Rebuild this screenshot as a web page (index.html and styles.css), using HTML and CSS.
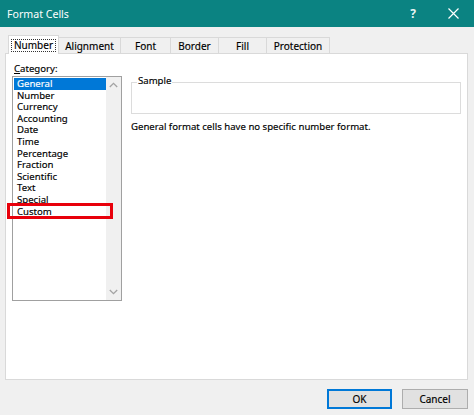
FILE: index.html
```html
<!DOCTYPE html>
<html>
<head>
<meta charset="utf-8">
<link rel="stylesheet" href="styles.css">
</head>
<body>
<div class="window">
  <div class="titlebar">
    <span class="title">Format Cells</span>
    <span class="help">?</span>
    <svg class="close" width="11" height="11" viewBox="0 0 11 11"><path d="M0.5 0.5L10.5 10.5M10.5 0.5L0.5 10.5" stroke="#ffffff" stroke-width="1.2" fill="none"/></svg>
  </div>
  <div class="body">
    <div class="tabs">
      <div class="tab active"><span class="focus">Number</span></div>
      <div class="tab w-align">Alignment</div>
      <div class="tab w-font">Font</div>
      <div class="tab w-border">Border</div>
      <div class="tab w-fill">Fill</div>
      <div class="tab w-prot">Protection</div>
    </div>
    <div class="panel">
      <div class="left">
        <div class="label"><u>C</u>ategory:</div>
        <div class="listbox">
          <ul class="items">
            <li class="sel">General</li>
            <li>Number</li>
            <li>Currency</li>
            <li>Accounting</li>
            <li>Date</li>
            <li>Time</li>
            <li>Percentage</li>
            <li>Fraction</li>
            <li>Scientific</li>
            <li>Text</li>
            <li>Special</li>
            <li>Custom</li>
          </ul>
          <div class="scrollbar">
            <svg width="9" height="6" viewBox="0 0 9 6"><path d="M0.8 5L4.5 1.3L8.2 5" stroke="#a3a3a3" stroke-width="1.3" fill="none"/></svg>
            <svg width="9" height="6" viewBox="0 0 9 6"><path d="M0.8 1L4.5 4.7L8.2 1" stroke="#a3a3a3" stroke-width="1.3" fill="none"/></svg>
          </div>
        </div>
      </div>
      <div class="right">
        <div class="sample">
          <span class="legend">Sample</span>
        </div>
        <div class="desc">General format cells have no specific number format.</div>
      </div>
    </div>
    <div class="buttons">
      <div class="btn ok">OK</div>
      <div class="btn cancel">Cancel</div>
    </div>
  </div>
  <div class="highlight"></div>
</div>
</body>
</html>
```
FILE: styles.css
```css
html, body {
  margin: 0;
  padding: 0;
}
body {
  width: 474px;
  height: 415px;
  overflow: hidden;
  background: #f0f0f0;
  font-family: "Noto Sans", "Open Sans", sans-serif;
  font-size: 9.6px;
  color: #000;
  -webkit-text-stroke: 0.15px #000;
}
.window {
  position: relative;
  width: 474px;
  height: 415px;
  display: flex;
  flex-direction: column;
}
.titlebar {
  height: 27px;
  background: #0b8382;
  color: #fff;
  display: flex;
  align-items: center;
  padding-left: 7px;
  box-sizing: border-box;
  -webkit-text-stroke: 0;
}
.title {
  font-size: 10.6px;
  flex: 1;
}
.help {
  font-size: 12px;
  font-weight: bold;
  margin-right: 32px;
  color: #e8f4f4;
}
.close {
  margin-right: 15px;
}
.body {
  flex: 1;
  display: flex;
  flex-direction: column;
  padding: 8px 6px 0 5px;
}
.tabs {
  display: flex;
  align-items: flex-end;
  height: 18px;
  padding-left: 3px;
  position: relative;
  z-index: 1;
}
.tab {
  box-sizing: border-box;
  height: 16px;
  border: 1px solid #d9d9d9;
  border-bottom: none;
  border-left: none;
  background: #f0f0f0;
  display: flex;
  align-items: center;
  justify-content: center;
  font-size: 10px;
  line-height: 12px;
}
.tab.active {
  width: 51px;
  height: 19px;
  margin-bottom: -1px;
  background: #fff;
  border-left: 1px solid #d9d9d9;
}
.focus {
  border: 1px dotted #333;
  padding: 0 2px;
  line-height: 11px;
}
.w-align { width: 62px; }
.w-font { width: 50px; }
.w-border { width: 48px; }
.w-fill { width: 48px; }
.w-prot { width: 63px; }
.panel {
  height: 327px;
  box-sizing: border-box;
  background: #fff;
  border: 1px solid #d9d9d9;
  display: flex;
  padding: 9px 0 0 6px;
}
.left {
  width: 119px;
}
.label {
  line-height: 12px;
  padding-left: 2px;
  height: 13px;
}
.label u {
  text-decoration-thickness: 1px;
  text-underline-offset: 1px;
}
.listbox {
  width: 110px;
  height: 225px;
  box-sizing: border-box;
  border: 1px solid #a0a0a0;
  display: flex;
}
.items {
  list-style: none;
  margin: 0;
  padding: 1px 0 0 1px;
  flex: 1;
}
.items li {
  height: 11.6px;
  line-height: 11.6px;
  padding-left: 3px;
  white-space: nowrap;
}
.items li.sel {
  background: #0078d7;
  color: #fff;
  -webkit-text-stroke: 0.15px #fff;
}
.scrollbar {
  width: 15px;
  background: #f0f0f0;
  display: flex;
  flex-direction: column;
  justify-content: space-between;
  align-items: center;
  padding: 5px 0 5px;
}
.right {
  flex: 1;
  padding-right: 6px;
}
.sample {
  height: 32px;
  box-sizing: border-box;
  border: 1px solid #dcdcdc;
  margin-top: 19px;
  position: relative;
}
.legend {
  position: absolute;
  top: -8px;
  left: 5px;
  background: #fff;
  padding: 0 1px;
  line-height: 12px;
}
.desc {
  margin-top: 7px;
  line-height: 12px;
  white-space: nowrap;
}
.buttons {
  display: flex;
  justify-content: flex-end;
  padding-top: 9px;
  gap: 10px;
}
.btn {
  box-sizing: border-box;
  height: 20px;
  background: #e1e1e1;
  border: 1px solid #adadad;
  display: flex;
  align-items: center;
  justify-content: center;
  font-size: 10px;
}
.btn.ok {
  width: 65px;
  border: 1px solid #0078d7;
  box-shadow: inset 0 0 0 1px #0078d7;
}
.btn.cancel {
  width: 66px;
}
.highlight {
  position: absolute;
  left: 7px;
  top: 203px;
  width: 106px;
  height: 16px;
  box-sizing: border-box;
  border: 3px solid #e8000b;
}
```
